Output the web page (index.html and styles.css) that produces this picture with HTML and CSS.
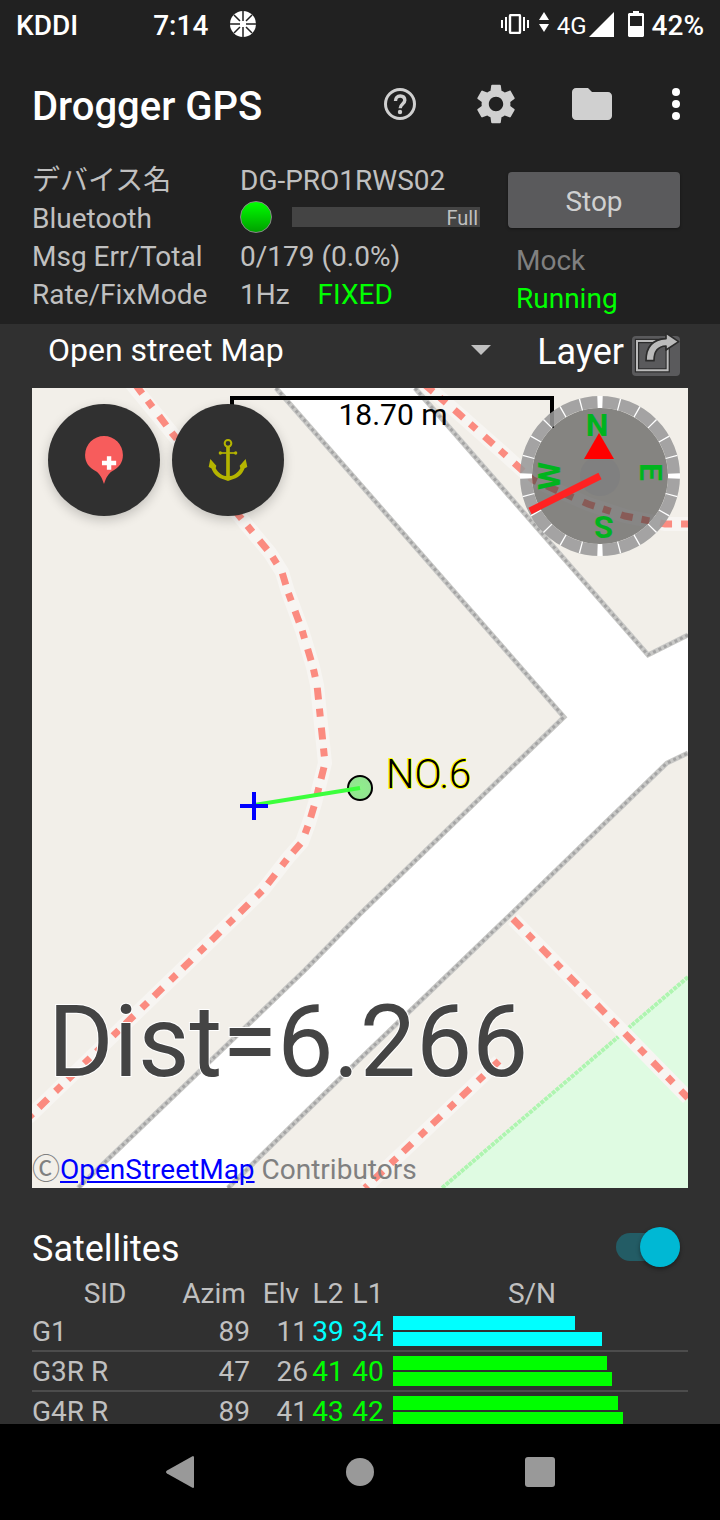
FILE: index.html
```html
<!doctype html>
<html lang="ja">

<head>
    <meta charset="utf-8">
    <meta name="viewport" content="width=device-width, initial-scale=1">
    <title>Drogger GPS</title>
    <link rel="stylesheet" href="styles.css">
</head>

<body>
    <div class="status-bar">
        <span class="carrier">KDDI</span>
        <span class="clock">7:14</span>
        <svg class="notification" width="26" height="26" viewBox="0 0 26 26" aria-hidden="true">
            <circle cx="13" cy="13" r="13" fill="#fff" />
            <g stroke="#212121" stroke-width="1.5">
                <path d="M13 0v10M13 16v10M0 13h10M16 13h10" />
                <path d="M4 4l6 6M22 4l-6 6M4 22l6-6M22 22l-6-6" />
            </g>
        </svg>
        <div class="status-icons">
            <svg width="28" height="20" viewBox="0 0 28 20" fill="#fff" aria-hidden="true">
                <rect x="9" y="1" width="10" height="18" rx="1" fill="none" stroke="#fff" stroke-width="2.4" />
                <path d="M4 3h2v14H4zM0 6h2v8H0zM22 3h2v14h-2zM26 6h2v8h-2z" />
            </svg>
            <svg class="updown" width="10" height="20" viewBox="0 0 10 20" fill="#fff" aria-hidden="true">
                <path d="M5 0l5 8H0zM5 20l5-8H0z" />
            </svg>
            <span class="network">4G</span>
            <svg width="25" height="25" viewBox="0 0 25 25" aria-hidden="true">
                <path d="M25 0v25H0z" fill="#fff" />
            </svg>
            <svg class="battery" width="16" height="26" viewBox="0 0 16 26" aria-hidden="true">
                <path d="M5 0h6v2h4l1 1v22l-1 1H1l-1-1V3l1-1h4z" fill="#fff" />
                <path d="M2 5h12v10H2z" fill="#212121" />
            </svg>
            <span class="percent">42%</span>
        </div>
    </div>

    <header class="toolbar">
        <h1>Drogger GPS</h1>
        <button type="button" class="tool" aria-label="Help">
            <svg width="32" height="32" viewBox="0 0 32 32" fill="none" stroke="#d0d0d0">
                <circle cx="16" cy="16" r="14.5" stroke-width="3" />
                <path d="M11.500 13c0-3 1.800-5 4.700-5s4.600 1.700 4.600 4.300c0 3.700-4.600 3.700-4.600 8" stroke-width="3.4" />
                <circle cx="16" cy="24" r="2.2" fill="#d0d0d0" stroke="none" />
            </svg>
        </button>
        <button type="button" class="tool" aria-label="Settings">
            <svg width="48" height="48" viewBox="0 0 24 24" fill="#d0d0d0">
                <path d="M19.140 12.940c.04-.3.06-.61.06-.94 0-.32-.02-.64-.07-.94l2.030-1.580c.18-.14.23-.41.12-.61l-1.920-3.320c-.12-.22-.37-.29-.59-.22l-2.390.96c-.5-.38-1.030-.7-1.620-.94L14.400 2.810c-.04-.24-.24-.41-.48-.41h-3.840c-.24 0-.43.17-.47.41L9.250 5.350c-.59.24-1.130.57-1.620.94l-2.390-.96c-.22-.08-.47 0-.59.22L2.740 8.870c-.12.21-.08.47.12.61l2.030 1.580c-.05.3-.09.63-.09.94s.02.64.07.94l-2.030 1.580c-.18.14-.23.41-.12.61l1.920 3.320c.12.22.37.29.59.22l2.390-.96c.5.38 1.030.7 1.620.94l.36 2.540c.05.24.24.41.48.41h3.840c.24 0 .44-.17.47-.41l.36-2.540c.59-.24 1.130-.56 1.620-.94l2.390.96c.22.08.47 0 .59-.22l1.920-3.320c.12-.22.07-.47-.12-.61l-2.010-1.580zM12 15.600c-1.980 0-3.600-1.620-3.600-3.600s1.620-3.600 3.600-3.600 3.600 1.620 3.600 3.600-1.620 3.600-3.600 3.600z" />
            </svg>
        </button>
        <button type="button" class="tool" aria-label="Files">
            <svg width="48" height="48" viewBox="0 0 24 24" fill="#d0d0d0">
                <path d="M10 4H4c-1.100 0-2 .9-2 2v12c0 1.100.9 2 2 2h16c1.100 0 2-.9 2-2V8c0-1.100-.9-2-2-2h-8l-2-2z" />
            </svg>
        </button>
        <button type="button" class="tool overflow" aria-label="Menu">
            <svg width="8" height="32" viewBox="0 0 8 32" fill="#fff">
                <circle cx="4" cy="4" r="4" />
                <circle cx="4" cy="16" r="4" />
                <circle cx="4" cy="28" r="4" />
            </svg>
        </button>
    </header>

    <section class="device">
        <dl class="device-info">
            <dt>デバイス名</dt>
            <dd>DG-PRO1RWS02</dd>
            <dt>Bluetooth</dt>
            <dd><span class="led"></span><span class="buffer">Full</span></dd>
            <dt>Msg Err/Total</dt>
            <dd>0/179 (0.0%)</dd>
            <dt>Rate/FixMode</dt>
            <dd><span>1Hz</span><span class="ok">FIXED</span></dd>
        </dl>
        <div class="device-actions">
            <button type="button" class="stop">Stop</button>
            <div class="mock">Mock</div>
            <div class="mock ok">Running</div>
        </div>
    </section>

    <main>
        <div class="map-options">
            <div class="map-select">
                <select aria-label="Map">
                    <option>Open street Map</option>
                </select>
            </div>
            <label for="layer">Layer</label>
            <button type="button" class="layer" id="layer">
                <svg width="48" height="44" viewBox="0 0 144 132" aria-hidden="true">
                    <g fill="none">
                        <path d="M15 27h92v88H15z" stroke="#2c2c2c" stroke-width="13" />
                        <path d="M15 27h92v88H15z" stroke="#bbb" stroke-width="6" />
                    </g>
                    <path d="M42 86c0-42 20-64 60-66V3l38 26-38 25V42C76 43 66 58 66 86z" fill="#bbb" stroke="#2c2c2c" stroke-width="5" stroke-linejoin="round" />
                </svg>
            </button>
        </div>

        <div class="map">
            <svg class="map-canvas" viewBox="0 0 656 800" role="img" aria-label="Map">
                <defs>
                    <radialGradient id="point">
                        <stop offset="0" stop-color="#8df08a" />
                        <stop offset="1" stop-color="#94e292" />
                    </radialGradient>
                </defs>
                <rect width="656" height="800" fill="#f2efe9" />

                <!-- park -->
                <path d="M656 589L410 800H656z" fill="#dffbe2" />
                <path class="park-edge" d="M656 589L410 800" />

                <!-- roads -->
                <path d="M244 0L532 329 328 526 273 582 46 800H196L328 671 478 527 635 375 656 365V247L616 267 383 0z" fill="#fff" />
                <g class="road-edge">
                    <path d="M244 0L532 329 328 526 273 582 46 800" />
                    <path d="M196 800L328 671 478 527 635 375 656 365" />
                    <path d="M656 247L616 267 383 0" />
                </g>
                <g class="road-dots">
                    <path d="M244 0L532 329 328 526 273 582 46 800" />
                    <path d="M196 800L328 671 478 527 635 375 656 365" />
                    <path d="M656 247L616 267 383 0" />
                </g>

                <!-- footpaths -->
                <g class="path-casing">
                    <path d="M98-6L140 45 213 135 238 165 250 184 256 204 270 242 281 279 285 297 293 375 283 415 277 435 270 454 256 470 231 502 146 585-4 730" />
                    <path d="M392-4L426 25 470 64 501 92 556 116 593 128 633 136H656" />
                    <path d="M481 531L656 710" />
                    <path d="M467 673L333 800" />
                </g>
                <g class="path-line">
                    <path d="M103-4L140 45 213 135 238 165 250 184 256 204 270 242 281 279 285 297 293 375 283 415 277 435 270 454 256 470 231 502 146 585-4 730" />
                    <path d="M392-4L426 25 470 64 501 92 556 116 593 128 633 136H656" />
                    <path d="M481 531L656 710" />
                    <path d="M467 673L333 800" />
                </g>

                <!-- scale -->
                <path d="M200 40V10H520V40" fill="none" stroke="#000" stroke-width="4" />
                <text class="scale-text" x="361" y="37">18.70 m</text>

                <!-- current position and target -->
                <circle cx="328" cy="400" r="12" fill="url(#point)" stroke="#000" stroke-width="2" />
                <path d="M222 417L328 400" stroke="#3cff3c" stroke-width="4" />
                <path d="M208 418h28M222 404v28" stroke="#00f" stroke-width="4" />
                <text class="point-name" x="354" y="400">NO.6</text>
                <text class="distance" x="16" y="688">Dist=6.266</text>

                <!-- compass -->
                <g>
                    <circle cx="568" cy="88" r="68" fill="#3c3c3c" fill-opacity=".6" />
                    <circle cx="568" cy="88" r="20" fill="#808080" />
                    <circle cx="568" cy="88" r="74" fill="none" stroke="#999" stroke-opacity=".88" stroke-width="12" />
                    <circle class="ticks" cx="568" cy="88" r="74" pathLength="360" />
                    <circle class="ticks-main" cx="568" cy="88" r="74" pathLength="360" />
                    <g class="compass-text">
                        <text transform="translate(565 48)">N</text>
                        <text transform="translate(608 84) rotate(90)">E</text>
                        <text transform="translate(572 128) rotate(180)">S</text>
                        <text transform="translate(528 88) rotate(-90)">W</text>
                    </g>
                    <path d="M567 45l15 26h-30z" fill="#f00" />
                    <path d="M568 88L498 123" stroke="#ff2222" stroke-width="7" />
                </g>
            </svg>

            <div class="map-buttons">
                <button type="button" aria-label="Add point">
                    <svg width="38" height="48" viewBox="0 0 112 142">
                        <path d="M56 0a56 56 0 0 1 56 56c0 22-12 38-32 48-10 6-18 18-24 38-6-20-14-32-24-38C12 94 0 78 0 56A56 56 0 0 1 56 0z" fill="#f75c5c" />
                        <path d="M50 80h42M71 60v40" stroke="#fff" stroke-width="13" />
                    </svg>
                </button>
                <button type="button" aria-label="Anchor">
                    <svg width="40" height="42" viewBox="0 0 120 126">
                        <g fill="none" stroke="#b4b400">
                            <circle cx="60" cy="13" r="10" stroke-width="6" />
                            <path d="M60 22v96" stroke-width="11" />
                            <path d="M36 42h48" stroke-width="5" />
                        </g>
                        <g fill="#b4b400">
                            <circle cx="37" cy="42" r="5" />
                            <circle cx="83" cy="42" r="5" />
                            <path d="M7 60l18 20-2 8c8 14 20 24 37 24s29-10 37-24l-2-8 18-20 5 24-8 4c-8 20-22 30-40 34l-10 4-10-4c-18-4-32-14-40-34l-8-4z" />
                        </g>
                    </svg>
                </button>
            </div>

            <div class="attribution"><span class="copy">Ⓒ</span><a href="https://www.openstreetmap.org/copyright">OpenStreetMap</a> Contributors</div>
        </div>

        <section class="satellites">
            <div class="satellites-head">
                <h2><label for="showSatellites">Satellites</label></h2>
                <input type="checkbox" role="switch" class="switch" id="showSatellites" checked>
            </div>
            <table>
                <thead>
                    <tr>
                        <th class="col-sid">SID</th>
                        <th class="col-azim">Azim</th>
                        <th class="col-elv">Elv</th>
                        <th class="col-level">L2</th>
                        <th class="col-level">L1</th>
                        <th class="col-sn">S/N</th>
                    </tr>
                </thead>
                <tbody>
                    <tr class="mid">
                        <td>G1</td>
                        <td class="num">89</td>
                        <td class="num">11</td>
                        <td class="level">39</td>
                        <td class="level">34</td>
                        <td class="bars">
                            <div class="bar" style="width: 61.7%"></div>
                            <div class="bar" style="width: 70.8%"></div>
                        </td>
                    </tr>
                    <tr class="good">
                        <td>G3R R</td>
                        <td class="num">47</td>
                        <td class="num">26</td>
                        <td class="level">41</td>
                        <td class="level">40</td>
                        <td class="bars">
                            <div class="bar" style="width: 72.6%"></div>
                            <div class="bar" style="width: 74.4%"></div>
                        </td>
                    </tr>
                    <tr class="good">
                        <td>G4R R</td>
                        <td class="num">89</td>
                        <td class="num">41</td>
                        <td class="level">43</td>
                        <td class="level">42</td>
                        <td class="bars">
                            <div class="bar" style="width: 76.2%"></div>
                            <div class="bar" style="width: 78%"></div>
                        </td>
                    </tr>
                </tbody>
            </table>
        </section>
    </main>

    <nav class="nav-bar">
        <button type="button" aria-label="Back">
            <svg width="32" height="32" viewBox="0 0 32 32" fill="#999">
                <path d="M3 14.500L28 .4q2-1 2 1.200v28.800q0 2.200-2 1.200L3 17.500q-2-1.500 0-3z" />
            </svg>
        </button>
        <button type="button" aria-label="Home">
            <svg width="28" height="28" viewBox="0 0 28 28" fill="#999">
                <circle cx="14" cy="14" r="14" />
            </svg>
        </button>
        <button type="button" aria-label="Recent apps">
            <svg width="30" height="30" viewBox="0 0 30 30" fill="#999">
                <rect width="30" height="30" rx="3" />
            </svg>
        </button>
    </nav>
</body>

</html>
```
FILE: styles.css
```css
* {
    box-sizing: border-box;
}

body {
    margin: 0;
    height: 100vh;
    display: flex;
    flex-direction: column;
    background: #303030;
    color: #c0c0c0;
    font-family: Roboto, "Noto Sans CJK JP", sans-serif;
    font-size: 28px;
    line-height: 38px;
    overflow: hidden;
}

button {
    padding: 0;
    border: none;
    background: none;
    color: inherit;
    font: inherit;
    cursor: pointer;
}

svg {
    display: block;
    flex: none;
}

h1,
h2 {
    margin: 0;
    color: #fff;
}

/* Status bar */
.status-bar {
    display: flex;
    align-items: center;
    flex: none;
    height: 48px;
    padding: 0 16px;
    background: #212121;
    color: #fff;
    font-weight: 500;
}

.status-bar span {
    padding-top: 4px;
}

.clock {
    margin-left: 75px;
}

.notification {
    margin-left: 22px;
}

.status-icons {
    display: flex;
    align-items: center;
    margin-left: auto;
}

.updown {
    margin: 0 8px 4px 10px;
}

.network {
    margin-right: 2px;
    font-size: 24px;
    font-weight: 400;
}

.battery {
    margin: 0 8px 0 14px;
}

/* Toolbar */
.toolbar {
    display: flex;
    align-items: center;
    flex: none;
    height: 112px;
    padding: 0 8px 0 32px;
    background: #212121;
}

.toolbar h1 {
    flex: 1;
    padding-top: 5px;
    font-size: 40px;
    font-weight: 500;
    line-height: 48px;
}

.tool {
    display: flex;
    align-items: center;
    justify-content: center;
    width: 96px;
    height: 96px;
}

.overflow {
    width: 72px;
}

/* Device panel */
.device {
    display: flex;
    flex: none;
    gap: 28px;
    padding: 2px 40px 6px 32px;
    background: #212121;
}

.device-info {
    display: grid;
    flex: 1;
    grid-template-columns: 208px 1fr;
    grid-auto-rows: 38px;
    margin: 0;
}

.device-info dd {
    display: flex;
    align-items: center;
    gap: 28px;
    margin: 0;
}

.ok {
    color: #00ff00;
}

.led {
    width: 32px;
    height: 32px;
    margin-bottom: 4px;
    border: 1px solid #888;
    border-radius: 50%;
    background: linear-gradient(#00ff00, #00a000);
}

.buffer {
    flex: 1;
    height: 20px;
    margin: 0 0 4px -8px;
    padding-right: 2px;
    background: #444;
    font-size: 20px;
    line-height: 22px;
    text-align: right;
}

.device-actions {
    width: 172px;
    padding-top: 10px;
}

.stop {
    display: block;
    width: 100%;
    height: 56px;
    margin-bottom: 14px;
    padding-top: 4px;
    border-radius: 4px;
    background: #5a5a5c;
    box-shadow: 0 1px 3px rgba(0, 0, 0, 0.4);
    color: #d0d0d0;
}

.mock {
    padding-left: 8px;
    color: #808080;
}

.mock.ok {
    color: #00ff00;
}

/* Map */
main {
    flex: 1;
    min-height: 0;
    padding: 0 32px;
    overflow: hidden;
}

.map-options {
    display: flex;
    align-items: center;
    height: 64px;
    padding: 0 8px 12px 0;
    color: #fff;
    font-size: 36px;
}

.map-options label {
    padding-top: 4px;
}

.map-select {
    position: relative;
    flex: 1;
    margin-right: 32px;
}

.map-select::after {
    content: "";
    position: absolute;
    top: 20px;
    right: 14px;
    border: 10px solid transparent;
    border-top-color: #c0c0c0;
    border-bottom: none;
    pointer-events: none;
}

.map-select select {
    display: block;
    width: 100%;
    height: 50px;
    padding: 0 48px 0 16px;
    border: none;
    background: none;
    color: #fff;
    font-family: inherit;
    font-size: 32px;
    appearance: none;
}

.map-select option {
    background: #303030;
}

.layer {
    display: flex;
    align-items: flex-end;
    align-self: flex-end;
    width: 48px;
    height: 40px;
    margin-left: 8px;
    border-radius: 4px;
    background: #5a5a5c;
}

.map {
    position: relative;
    overflow: hidden;
}

.map-canvas {
    width: 100%;
    height: auto;
}

.park-edge {
    stroke: #aef5b0;
    stroke-width: 4;
    stroke-dasharray: 4 1;
}

.road-edge {
    fill: none;
    stroke: #c8c8c6;
    stroke-width: 5;
}

.road-dots {
    fill: none;
    stroke: #a4a4a4;
    stroke-width: 3;
    stroke-dasharray: 3 3;
}

.path-casing {
    fill: none;
    stroke: #f7f5f2;
    stroke-width: 14;
}

.path-line {
    fill: none;
    stroke: #fb8b80;
    stroke-width: 7;
    stroke-dasharray: 12 9 8 11;
}

.scale-text {
    font-size: 30px;
    text-anchor: middle;
}

.point-name,
.distance {
    stroke-width: 2px;
    paint-order: stroke;
}

.point-name {
    fill: #000;
    stroke: #ffff00;
    font-size: 40px;
    font-weight: 300;
}

.distance {
    fill: #444;
    stroke: #fff;
    font-size: 100px;
}

.ticks,
.ticks-main {
    fill: none;
    stroke: #fff;
    stroke-width: 12;
    stroke-dasharray: 1 14;
    stroke-dashoffset: 0.5;
}

.ticks-main {
    stroke-dasharray: 4 86;
    stroke-dashoffset: 2;
}

.compass-text {
    fill: #00b41e;
    font-size: 32px;
    font-weight: 700;
    text-anchor: middle;
}

.map-buttons {
    position: absolute;
    top: 16px;
    left: 16px;
    display: flex;
    gap: 12px;
}

.map-buttons button {
    display: flex;
    align-items: center;
    justify-content: center;
    width: 112px;
    height: 112px;
    border-radius: 50%;
    background: #303030;
    box-shadow: 0 4px 12px rgba(0, 0, 0, 0.2);
}

.attribution {
    position: absolute;
    bottom: 0;
    left: 0;
    color: #808080;
    line-height: 36px;
}

.attribution a {
    color: #0000ff;
}

/* Satellites */
.satellites {
    padding-top: 32px;
}

.satellites-head {
    display: flex;
    align-items: center;
    justify-content: space-between;
    height: 54px;
    padding-right: 8px;
}

.satellites h2 {
    padding-top: 4px;
    font-size: 36px;
    font-weight: 400;
}

.switch {
    position: relative;
    width: 64px;
    height: 28px;
    margin: 0;
    border-radius: 14px;
    background: #235c65;
    appearance: none;
}

.switch::before {
    content: "";
    position: absolute;
    top: -6px;
    right: 0;
    width: 40px;
    height: 40px;
    border-radius: 50%;
    background: #00b8d4;
    box-shadow: 0 2px 4px rgba(0, 0, 0, 0.4);
}

table {
    width: 100%;
    border-spacing: 0;
    table-layout: fixed;
}

th,
td {
    height: 38px;
    padding: 2px 0 0;
    font-weight: 400;
    line-height: 36px;
}

td {
    height: 40px;
    border-bottom: 2px solid #4c4c4c;
}

.col-sid {
    width: 146px;
}

.col-azim {
    width: 72px;
}

.col-elv {
    width: 58px;
    padding-left: 4px;
}

.col-level {
    width: 40px;
}

.col-sn {
    padding-right: 12px;
}

.num {
    text-align: right;
}

.level {
    text-align: center;
}

.bars {
    padding: 0 0 0 5px;
}

.bar {
    height: 14px;
}

.bar + .bar {
    margin-top: 2px;
}

.mid .level {
    color: #00ffff;
}

.mid .bar {
    background: #00ffff;
}

.good .level {
    color: #00ff00;
}

.good .bar {
    background: #00ff00;
}

/* Navigation */
.nav-bar {
    display: flex;
    align-items: center;
    justify-content: center;
    flex: none;
    height: 96px;
    background: #000;
}

.nav-bar button {
    display: flex;
    align-items: center;
    justify-content: center;
    width: 25%;
    height: 96px;
}
```
